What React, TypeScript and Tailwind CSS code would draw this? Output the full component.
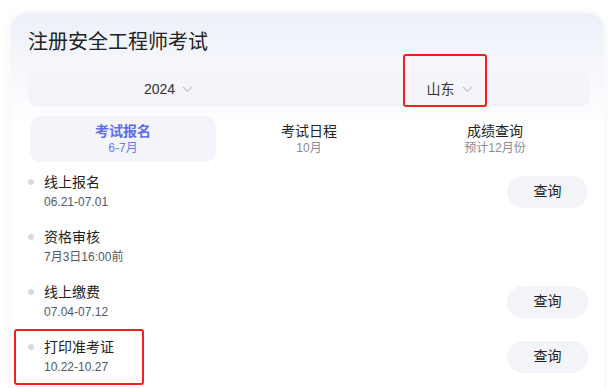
import React from 'react';

const FONT = '"Liberation Sans", "Noto Sans CJK SC", sans-serif';

type Step = {
  title: string;
  date: string;
  action?: boolean;
};

const steps: Step[] = [
  { title: '线上报名', date: '06.21-07.01', action: true },
  { title: '资格审核', date: '7月3日16:00前' },
  { title: '线上缴费', date: '07.04-07.12', action: true },
  { title: '打印准考证', date: '10.22-10.27', action: true },
];

const tabs = [
  { name: '考试报名', sub: '6-7月' },
  { name: '考试日程', sub: '10月' },
  { name: '成绩查询', sub: '预计12月份' },
];

function Chevron() {
  return (
    <svg width="11" height="7" viewBox="0 0 11 7" fill="none" className="ml-[7px]">
      <path d="M1 1l4.5 4.5L10 1" stroke="#c3c6cf" strokeWidth="1.1" />
    </svg>
  );
}

export default function App() {
  const active = 0;

  return (
    <div className="relative h-[388px] w-[612px] overflow-hidden bg-white" style={{ fontFamily: FONT }}>
      <div className="ml-[11px] mt-[13px] w-[593px] rounded-[16px] bg-[linear-gradient(180deg,#edf0fa_0px,#ffffff_115px)] pb-4 pl-[17px] pr-[14px] pt-[15px] shadow-[0_0_10px_rgba(0,0,0,0.06)]">
        <h1 className="text-[20px] leading-[28px] text-[#222]">注册安全工程师考试</h1>

        <div className="mt-4 grid h-[35px] grid-cols-2 rounded-[10px] bg-[#f4f5fa] text-[14px] text-[#333]">
          <div className="flex items-center justify-center">
            2024
            <Chevron />
          </div>
          <div className="flex items-center justify-center">
            山东
            <Chevron />
          </div>
        </div>

        <div className="mx-[2px] mt-[9px] grid grid-cols-3">
          {tabs.map((t, i) => (
            <div
              key={t.name}
              className={
                i === active
                  ? 'flex h-[46px] flex-col items-center justify-center rounded-[10px] bg-[#f4f5fa]'
                  : 'flex h-[46px] flex-col items-center justify-center'
              }
            >
              <div
                className={
                  i === active
                    ? 'text-[14px] font-bold leading-[18px] text-[#5b6cf3]'
                    : 'text-[14px] leading-[18px] text-[#222]'
                }
              >
                {t.name}
              </div>
              <div
                className={
                  i === active
                    ? 'text-[12px] leading-[16px] text-[#6a7bf4]'
                    : 'text-[12px] leading-[16px] text-[#8a8c94]'
                }
              >
                {t.sub}
              </div>
            </div>
          ))}
        </div>

        <div className="mt-[2px]">
          {steps.map((s) => (
            <div key={s.title} className="flex h-[55px] items-center">
              <div className="flex-1">
                <div className="flex items-center">
                  <span className="h-[6px] w-[6px] rounded-full bg-[#d8d9df]" />
                  <span className="ml-[10px] text-[14px] leading-[20px] text-[#222]">{s.title}</span>
                </div>
                <div className="ml-[16px] text-[12px] leading-[20px] text-[#525866]">{s.date}</div>
              </div>
              {s.action && (
                <button className="mr-[2px] h-[32px] w-[81px] rounded-full bg-[#f3f4f8] text-[14px] text-[#222]">
                  查询
                </button>
              )}
            </div>
          ))}
        </div>
      </div>

      <div className="absolute left-[403px] top-[54px] h-[53px] w-[84px] rounded-[3px] border-2 border-[#f3201c]" />
      <div className="absolute left-[14px] top-[329px] h-[56px] w-[130px] rounded-[3px] border-2 border-[#f3201c]" />
    </div>
  );
}
